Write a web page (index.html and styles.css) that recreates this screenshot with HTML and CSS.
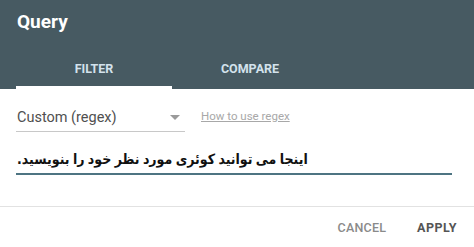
FILE: index.html
```html
<!DOCTYPE html>
<html>
<head>
<meta charset="utf-8">
<link rel="stylesheet" href="styles.css">
</head>
<body>
<div class="dialog">
  <div class="header">
    <div class="title">Query</div>
    <div class="tabs">
      <div class="tab active">FILTER</div>
      <div class="tab">COMPARE</div>
    </div>
  </div>
  <div class="body">
    <div class="row">
      <div class="select">
        <span class="select-text">Custom (regex)</span>
        <span class="arrow"></span>
      </div>
      <a class="link">How to use regex</a>
    </div>
    <div class="input"><span class="fa" dir="rtl">اینجا می توانید کوئری مورد نظر خود را بنویسید.</span></div>
  </div>
  <div class="footer">
    <span class="btn cancel">CANCEL</span>
    <span class="btn apply">APPLY</span>
  </div>
</div>
</body>
</html>
```
FILE: styles.css
```css
html, body { margin: 0; padding: 0; background: #fff; }
body { font-family: Roboto, "Liberation Sans", Arial, sans-serif; width: 474px; height: 247px; overflow: hidden; }
.dialog { display: flex; flex-direction: column; }
.header { background: #475a62; height: 89px; display: flex; flex-direction: column; }
.title { color: #fff; font-weight: 700; font-size: 19px; line-height: 24px; padding: 10px 0 0 17px; }
.tabs { display: flex; margin-top: auto; padding-left: 16px; height: 48px; }
.tab { width: 156px; display: flex; align-items: center; justify-content: center; color: #d3e2ec; font-weight: 700; font-size: 12.5px; padding-top: 6px; box-sizing: border-box; }
.tab.active { border-bottom: 3px solid #fff; padding-top: 9px; }
.body { padding: 0 22px 0 16px; }
.row { display: flex; align-items: flex-end; margin-top: 18px; }
.select { width: 169px; display: flex; align-items: center; border-bottom: 1px solid #c8c8c8; height: 25px; box-sizing: border-box; padding-left: 1px; padding-bottom: 4px; }
.select-text { color: #505050; font-size: 14.5px; flex: 1; }
.arrow { width: 0; height: 0; border-left: 5px solid transparent; border-right: 5px solid transparent; border-top: 5px solid #9a9a9a; margin-right: 5px; }
.link { color: #a8a8a8; font-size: 11.5px; text-decoration: underline; margin-left: 16px; padding-bottom: 9px; }
.input { margin-top: 16px; border-bottom: 2px solid #4d7482; height: 25px; padding-left: 1px; }
.fa { font-family: "DejaVu Sans Condensed", "DejaVu Sans", sans-serif; font-weight: 700; font-size: 14px; word-spacing: -1px; color: #111; display: inline-block; line-height: 22px; }
.footer { border-top: 1px solid #e2e2e2; margin-top: 31px; display: flex; justify-content: flex-end; padding: 13px 17px 0 0; gap: 31px; }
.btn { font-size: 12.5px; font-weight: 500; letter-spacing: 0.2px; }
.cancel { color: #8a8a8a; }
.apply { color: #555; font-weight: 700; letter-spacing: 0.5px; }
```
